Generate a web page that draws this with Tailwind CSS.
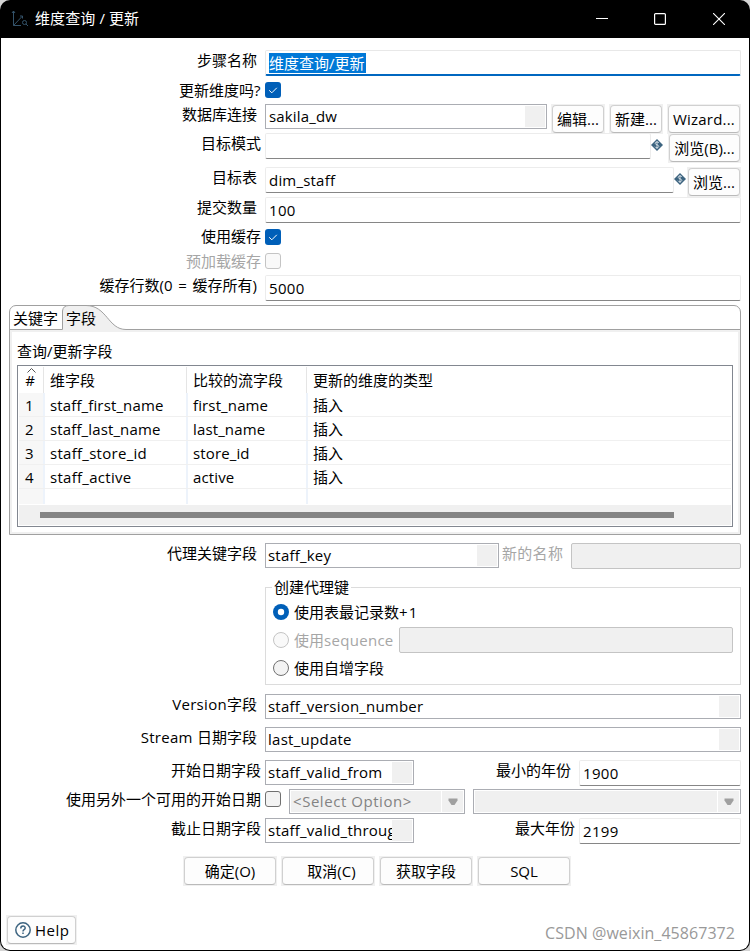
<!DOCTYPE html>
<html lang="zh-CN">
<head>
<meta charset="utf-8">
<title>维度查询 / 更新</title>
<script src="https://cdn.jsdelivr.net/npm/@tailwindcss/browser@4"></script>
</head>
<body class="w-[750px] h-[951px] overflow-hidden bg-[#d4d4d4] font-['Open_Sans','Noto_Sans_CJK_SC',sans-serif] text-[15px] leading-5 text-black whitespace-nowrap">
<div class="w-[750px] h-[951px] rounded-[10px] bg-black pb-px px-px overflow-hidden flex flex-col">

<header class="h-[38px] shrink-0 flex items-center text-white">
  <svg class="w-[18px] h-[18px] ml-[10px]" viewBox="0 0 18 18" fill="none" stroke="#34536a" stroke-width="1"><path d="M2.500 1v14.500H10M1 3l1.500-2 1.500 2M2.500 15.500l8.500-9M9 6h2.500v2.500"/><circle cx="13.500" cy="12.500" r="2"/><path d="M15 14l2 2"/></svg>
  <span class="ml-[6px] mb-[2px] w-[105px] tracking-[0.1px]">维度查询 / 更新</span>
  <svg class="ml-auto w-[12px] h-[12px]" viewBox="0 0 12 12" stroke="#fff"><path d="M0 5.500h12"/></svg>
  <svg class="ml-[46px] w-[12px] h-[12px]" viewBox="0 0 12 12" fill="none" stroke="#fff" stroke-width="1.200"><rect x=".6" y=".6" width="10.800" height="10.800" rx="1"/></svg>
  <svg class="ml-[47px] mr-[24px] w-[12px] h-[12px]" viewBox="0 0 12 12" stroke="#fff" stroke-width="1.100"><path d="M0 0l12 12M12 0L0 12"/></svg>
</header>

<main class="flex-1 bg-white rounded-b-[9px] pt-[12px] flex flex-col">

<div class="flex items-start h-[30px]">
  <label class="w-[264px] pr-[8px] text-right">步骤名称</label>
  <div class="w-[476px] h-[26px] border border-[#e8e8e8] border-b-2 border-b-[#0067c0] rounded-[2px] pl-[3px] pt-[2px]"><span class="block w-[97px] h-[20px] bg-[#0078d7] text-white">维度查询/更新</span></div>
</div>

<div class="flex items-start h-[24px]">
  <label class="w-[264px] pr-[4px] text-right">更新维度吗<span class="tracking-[0.5px]">?</span></label>
  <svg class="mt-[2px] w-4 h-4" viewBox="0 0 16 16"><rect width="16" height="16" rx="3" fill="#005fb8"/><path d="M4.200 8.300l2.600 2.500 5-5" fill="none" stroke="#fff"/></svg>
</div>

<div class="flex items-start h-[29px]">
  <label class="w-[264px] pr-[8px] text-right">数据库连接</label>
  <div class="w-[282px] h-[25px] border border-[#abadb3] flex justify-between p-px"><span class="pl-[2px] tracking-[0.15px]">sakila_dw</span><i class="w-[20px] bg-[#f0f0f0]"></i></div>
  <div class="ml-[4px] w-[54px] h-[30px] bg-[#f0f0f0] p-px"><div class="h-[28px] border border-[#d0d0d0] border-b-[#bababa] rounded-[4px] bg-[#fdfdfd] pt-[3px] text-center">编辑...</div></div>
  <div class="ml-[4px] w-[54px] h-[30px] bg-[#f0f0f0] p-px"><div class="h-[28px] border border-[#d0d0d0] border-b-[#bababa] rounded-[4px] bg-[#fdfdfd] pt-[3px] text-center">新建...</div></div>
  <div class="ml-[4px] w-[74px] h-[30px] bg-[#f0f0f0] p-px"><div class="h-[28px] border border-[#d0d0d0] border-b-[#bababa] rounded-[4px] bg-[#fdfdfd] pt-[3px] text-center tracking-[0.2px]">Wizard...</div></div>
</div>

<div class="flex items-start h-[34px]">
  <label class="w-[264px] pr-[4px] text-right">目标模式</label>
  <div class="w-[386px] h-[26px] border border-[#ececec] border-b-[#868686] rounded-[2px]"></div>
  <svg class="mt-[6px] w-[12px] h-[12px]" viewBox="0 0 12 12"><path d="M6 0l6 6-6 6-6-6z" fill="#3d6480"/><path d="M8 4Q7.500 3 6 3 4.200 3 4.200 4.400C4.200 6 7.800 5.600 7.800 7.400 7.800 9 4.500 9.300 4 7.700M6 2v8" fill="none" stroke="#e4ebf0" stroke-width=".8"/></svg>
  <div class="ml-[5px] w-[73px] h-[30px] bg-[#f0f0f0] p-px"><div class="h-[28px] border border-[#d0d0d0] border-b-[#bababa] rounded-[4px] bg-[#fdfdfd] pt-[3px] text-center">浏览(B)...</div></div>
</div>

<div class="flex items-start h-[30px]">
  <label class="w-[264px] pr-[8px] text-right">目标表</label>
  <div class="w-[409px] h-[26px] border border-[#ececec] border-b-[#868686] rounded-[2px] pl-[3px] pt-[2px] tracking-[0.2px]">dim_staff</div>
  <svg class="mt-[6px] w-[12px] h-[12px]" viewBox="0 0 12 12"><path d="M6 0l6 6-6 6-6-6z" fill="#3d6480"/><path d="M8 4Q7.500 3 6 3 4.200 3 4.200 4.400C4.200 6 7.800 5.600 7.800 7.400 7.800 9 4.500 9.300 4 7.700M6 2v8" fill="none" stroke="#e4ebf0" stroke-width=".8"/></svg>
  <div class="ml-px w-[54px] h-[30px] bg-[#f0f0f0] p-px"><div class="h-[28px] border border-[#d0d0d0] border-b-[#bababa] rounded-[4px] bg-[#fdfdfd] pt-[3px] text-center">浏览...</div></div>
</div>

<div class="flex items-start h-[29px]">
  <label class="w-[264px] pr-[8px] text-right">提交数量</label>
  <div class="w-[476px] h-[26px] border border-[#ececec] border-b-[#868686] rounded-[2px] pl-[3px] pt-[2px] tracking-[0.3px]">100</div>
</div>

<div class="flex items-start h-[25px]">
  <label class="w-[264px] pr-[4px] text-right">使用缓存</label>
  <svg class="mt-[3px] w-4 h-4" viewBox="0 0 16 16"><rect width="16" height="16" rx="3" fill="#005fb8"/><path d="M4.200 8.300l2.600 2.500 5-5" fill="none" stroke="#fff"/></svg>
</div>

<div class="flex items-start h-[24px]">
  <label class="w-[264px] pr-[4px] text-right text-[#a6a6a6]">预加载缓存</label>
  <i class="mt-[2px] w-4 h-4 rounded-[3px] border border-[#c4c4c4] bg-[#f9f9f9]"></i>
</div>

<div class="flex items-start h-[30px]">
  <label class="w-[264px] pr-[8px] text-right [word-spacing:1.8px]">缓存行数(0 = 缓存所有)</label>
  <div class="w-[476px] h-[26px] border border-[#ececec] border-b-[#868686] rounded-[2px] pl-[3px] pt-[2px] tracking-[0.3px]">5000</div>
</div>

<section class="ml-[8px] w-[732px] h-[230px] shrink-0 border border-[#a0a0a0] rounded-t-[7px] flex flex-col">
  <nav class="h-[24px] flex relative">
    <svg class="absolute -left-px -top-px w-[732px] h-[25px]" viewBox="0 0 732 25" fill="none"><path d="M53.500 25V6Q54 .5 60 .5H77C98 .5 99 24.500 117 24.500V25z" fill="#f0f0f0"/><path d="M0 24.500H53.500V6Q54 .5 60 .5H77C98 .5 99 24.500 117 24.500H732" stroke="#a0a0a0"/></svg>
    <span class="relative w-[53px] pl-[3px] pt-[2px]">关键字</span><span class="relative pl-[3px] pt-[2px]">字段</span>
  </nav>
  <div class="flex-1 border-2 border-[#f0f0f0] px-[5px] pt-[9px]">
    <div class="h-[24px]">查询/更新字段</div>
    <div class="w-[716px] h-[162px] border border-[#828790] p-px flex flex-col tracking-[0.13px]">
      <div class="h-[26px] grid grid-cols-[25px_143px_120px_1fr] tracking-normal">
        <div class="relative border-r border-[#e5e5e5] text-center pt-[3px] pl-px"><svg class="absolute left-[8px] top-px w-[9px] h-[5px]" viewBox="0 0 9 5" fill="none" stroke="#555"><path d="M.5 4.500l4-4 4 4"/></svg><span class="mr-[3px]">#</span></div>
        <div class="border-r border-[#e5e5e5] pl-[6px] pt-[3px]">维字段</div>
        <div class="border-r border-[#e5e5e5] pl-[6px] pt-[3px]">比较的流字段</div>
        <div class="pl-[6px] pt-[3px]">更新的维度的类型</div>
      </div>
      <div class="h-[24px] grid grid-cols-[26px_143px_120px_1fr] border-b border-[#f0f0f0]"><div class="bg-[#f7f7f7] border-r-2 border-[#edf3fb] pl-[6px] pt-[2px]">1</div><div class="border-r-2 border-[#edf3fb] pl-[5px] pt-[2px]">staff_first_name</div><div class="border-r-2 border-[#edf3fb] pl-[5px] pt-[2px]">first_name</div><div class="pl-[5px] pt-[2px] tracking-normal">插入</div></div>
      <div class="h-[24px] grid grid-cols-[26px_143px_120px_1fr] border-b border-[#f0f0f0]"><div class="bg-[#f7f7f7] border-r-2 border-[#edf3fb] pl-[6px] pt-[2px]">2</div><div class="border-r-2 border-[#edf3fb] pl-[5px] pt-[2px]">staff_last_name</div><div class="border-r-2 border-[#edf3fb] pl-[5px] pt-[2px]">last_name</div><div class="pl-[5px] pt-[2px] tracking-normal">插入</div></div>
      <div class="h-[24px] grid grid-cols-[26px_143px_120px_1fr] border-b border-[#f0f0f0]"><div class="bg-[#f7f7f7] border-r-2 border-[#edf3fb] pl-[6px] pt-[2px]">3</div><div class="border-r-2 border-[#edf3fb] pl-[5px] pt-[2px] tracking-[0.28px]">staff_store_id</div><div class="border-r-2 border-[#edf3fb] pl-[5px] pt-[2px]">store_id</div><div class="pl-[5px] pt-[2px] tracking-normal">插入</div></div>
      <div class="h-[24px] grid grid-cols-[26px_143px_120px_1fr] border-b border-[#f0f0f0]"><div class="bg-[#f7f7f7] border-r-2 border-[#edf3fb] pl-[6px] pt-[2px]">4</div><div class="border-r-2 border-[#edf3fb] pl-[5px] pt-[2px] tracking-[0.28px]">staff_active</div><div class="border-r-2 border-[#edf3fb] pl-[5px] pt-[2px]">active</div><div class="pl-[5px] pt-[2px] tracking-normal">插入</div></div>
      <div class="h-[15px] grid grid-cols-[26px_143px_120px_1fr]"><div class="bg-[#f7f7f7] border-r-2 border-[#edf3fb]"></div><div class="border-r-2 border-[#edf3fb]"></div><div class="border-r-2 border-[#edf3fb]"></div></div>
      <div class="mt-px flex-1 bg-[#f0f0f0] pl-[21px] pt-[7px]"><div class="w-[634px] h-[6px] bg-[#858585]"></div></div>
    </div>
  </div>
</section>

<div class="mt-[8px] flex items-start h-[44px]">
  <label class="w-[264px] pr-[8px] text-right">代理关键字段</label>
  <div class="w-[234px] h-[25px] border border-[#abadb3] flex justify-between p-px"><span class="pl-px tracking-[0.2px]">staff_key</span><i class="w-[20px] bg-[#f0f0f0]"></i></div>
  <span class="w-[72px] pl-[3px] text-[#a6a6a6] tracking-[0.3px]">新的名称</span>
  <div class="w-[170px] h-[26px] border border-[#c4c4c4] rounded-[2px] bg-[#f0f0f0]"></div>
</div>

<div class="ml-[264px] w-[476px] h-[98px] mb-[9px] shrink-0 border border-[#dcdcdc] pl-[7px]">
  <div class="h-[21px] -mt-[11px] -ml-px"><span class="inline-block bg-white px-[2px]">创建代理键</span></div>
  <div class="flex items-center h-[28px] gap-[5px]"><svg class="w-4 h-4" viewBox="0 0 16 16"><circle cx="8" cy="8" r="8" fill="#005fb8"/><circle cx="8" cy="8" r="3.200" fill="#fff"/></svg><span>使用表最记录数<span class="tracking-[1.2px]">+1</span></span></div>
  <div class="flex items-center h-[28px] gap-[5px] text-[#a6a6a6]"><svg class="w-4 h-4" viewBox="0 0 16 16"><circle cx="8" cy="8" r="7.500" fill="#f9f9f9" stroke="#c4c4c4"/></svg><span class="w-[100px]">使用<span class="tracking-[0.3px]">sequence</span></span><div class="w-[334px] h-[26px] border border-[#c4c4c4] rounded-[2px] bg-[#f0f0f0]"></div></div>
  <div class="flex items-center h-[28px] gap-[5px]"><svg class="w-4 h-4" viewBox="0 0 16 16"><circle cx="8" cy="8" r="7.500" fill="#f3f3f3" stroke="#707070"/></svg><span>使用自增字段</span></div>
</div>

<div class="flex items-start h-[33px]">
  <label class="w-[264px] pr-[8px] text-right"><span class="tracking-[0.3px]">Version</span>字段</label>
  <div class="w-[476px] h-[25px] border border-[#abadb3] flex justify-between p-px"><span class="pl-px tracking-[0.2px]">staff_version_number</span><i class="w-[20px] bg-[#f0f0f0]"></i></div>
</div>
<div class="flex items-start h-[33px]">
  <label class="w-[264px] pr-[8px] text-right"><span class="tracking-[0.3px]">Stream </span>日期字段</label>
  <div class="w-[476px] h-[25px] border border-[#abadb3] flex justify-between p-px"><span class="pl-px tracking-[0.27px]">last_update</span><i class="w-[20px] bg-[#f0f0f0]"></i></div>
</div>
<div class="flex items-start h-[29px]">
  <label class="w-[264px] pr-[4px] text-right">开始日期字段</label>
  <div class="w-[149px] h-[25px] border border-[#abadb3] flex p-px"><span class="w-[125px] pl-px overflow-hidden tracking-[0.23px]">staff_valid_from</span><i class="w-[20px] bg-[#f0f0f0]"></i></div>
  <label class="w-[165px] pr-[8px] text-right">最小的年份</label>
  <div class="w-[162px] h-[26px] border border-[#ececec] border-b-[#868686] rounded-[2px] pl-[3px] pt-[2px] tracking-[0.3px]">1900</div>
</div>
<div class="flex items-start h-[29px]">
  <label class="w-[264px] pr-[4px] text-right">使用另外一个可用的开始日期</label>
  <i class="mt-[2px] w-4 h-4 rounded-[3px] border border-[#707070] bg-[#f3f3f3]"></i>
  <div class="ml-[8px] w-[176px] h-[25px] border border-[#abadb3] flex p-px"><span class="flex-1 bg-[#f0f0f0] pl-[2px] text-[#838383] tracking-[0.55px]">&lt;Select Option&gt;</span><i class="ml-px w-[21px] bg-[#f0f0f0] flex justify-center pt-[7px]"><svg class="w-[10px] h-[8px]" viewBox="0 0 10 8"><path d="M.5.500h9v2L6.500 7h-3L.5 2.500z" fill="#a0a0a0"/></svg></i></div>
  <div class="ml-[8px] w-[268px] h-[25px] border border-[#abadb3] flex p-px"><span class="flex-1 bg-[#f0f0f0]"></span><i class="ml-px w-[21px] bg-[#f0f0f0] flex justify-center pt-[7px]"><svg class="w-[10px] h-[8px]" viewBox="0 0 10 8"><path d="M.5.500h9v2L6.500 7h-3L.5 2.500z" fill="#a0a0a0"/></svg></i></div>
</div>
<div class="flex items-start h-[38px]">
  <label class="w-[264px] pr-[4px] text-right">截止日期字段</label>
  <div class="w-[149px] h-[25px] border border-[#abadb3] flex p-px"><span class="w-[125px] pl-px overflow-hidden tracking-[0.23px]">staff_valid_through</span><i class="w-[20px] bg-[#f0f0f0]"></i></div>
  <label class="w-[165px] pr-[4px] text-right">最大年份</label>
  <div class="w-[162px] h-[26px] border border-[#ececec] border-b-[#868686] rounded-[2px] pl-[3px] pt-[2px] tracking-[0.3px]">2199</div>
</div>

<div class="flex items-start gap-[4px] pl-[182px] h-[59px]">
  <div class="w-[94px] h-[30px] bg-[#f0f0f0] p-px"><div class="h-[28px] border border-[#d0d0d0] border-b-[#bababa] rounded-[4px] bg-[#fdfdfd] pt-[3px] text-center">确定(O)</div></div>
  <div class="w-[94px] h-[30px] bg-[#f0f0f0] p-px"><div class="h-[28px] border border-[#d0d0d0] border-b-[#bababa] rounded-[4px] bg-[#fdfdfd] pt-[3px] pl-[7px] text-center">取消(C)</div></div>
  <div class="w-[94px] h-[30px] bg-[#f0f0f0] p-px"><div class="h-[28px] border border-[#d0d0d0] border-b-[#bababa] rounded-[4px] bg-[#fdfdfd] pt-[3px] text-center">获取字段</div></div>
  <div class="w-[94px] h-[30px] bg-[#f0f0f0] p-px"><div class="h-[28px] border border-[#d0d0d0] border-b-[#bababa] rounded-[4px] bg-[#fdfdfd] pt-[3px] text-center">SQL</div></div>
</div>

<footer class="flex items-start justify-between pl-[5px] pr-[14px]">
  <div class="w-[71px] h-[30px] bg-[#f0f0f0] p-px"><div class="h-[28px] border border-[#d0d0d0] border-b-[#bababa] rounded-[4px] bg-[#fdfdfd] pl-[7px] flex items-center gap-[4px]"><svg class="w-4 h-4" viewBox="0 0 16 16" fill="none" stroke="#3d6480" stroke-width="1.500"><circle cx="8" cy="8" r="7.200"/><path d="M5.800 6.500C5.800 3.300 10.200 3.400 10.200 6 10.200 7.700 8 7.600 8 9.400M8 10.500V12"/></svg><span class="tracking-[0.5px]">Help</span></div></div>
  <span class="mt-[8px] text-[16px] text-[#999] tracking-[0.05px]">CSDN @weixin_45867372</span>
</footer>

</main>
</div>
</body>
</html>
